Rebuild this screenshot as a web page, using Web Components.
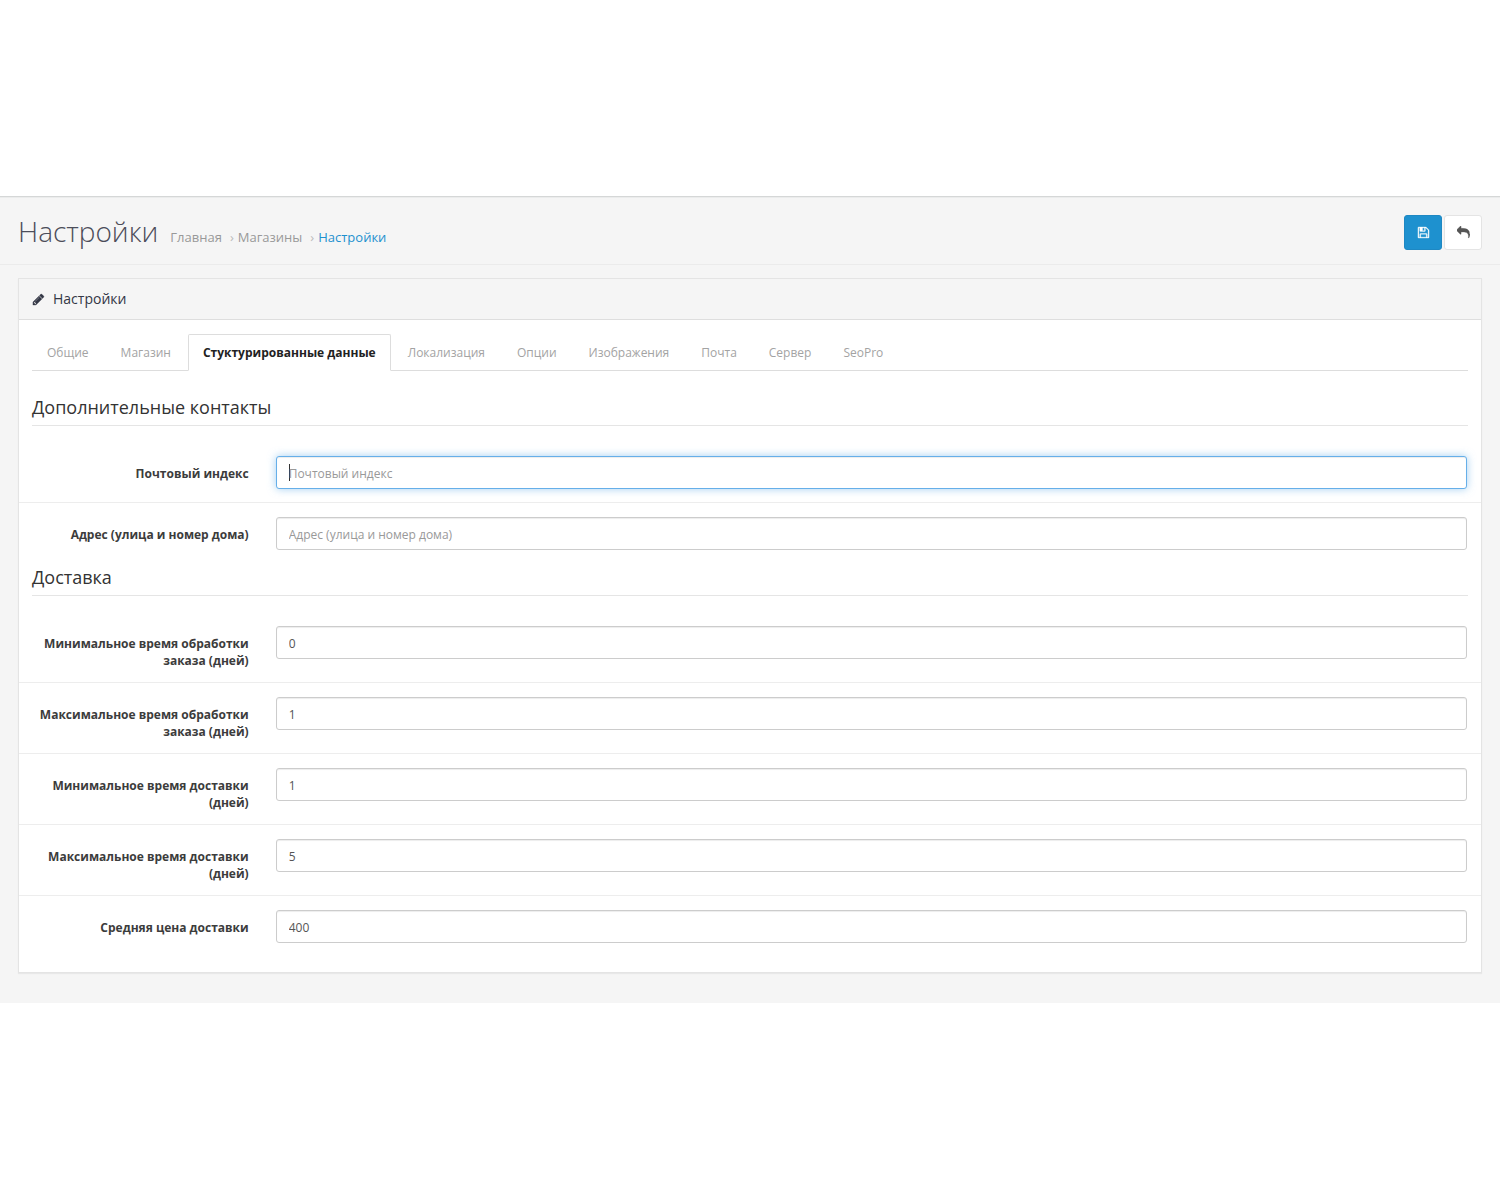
<!DOCTYPE html>
<html lang="ru">
<head>
<meta charset="utf-8">
<meta name="viewport" content="width=device-width, initial-scale=1">
<title>Настройки</title>
<style>
	body {
		margin: 0;
		padding: 196px 0;
		background: #fff;
		color: #3c3c3c;
		font-family: "Open Sans", "Noto Sans", sans-serif;
		font-size: 12px;
		line-height: 17px;
	}
</style>
</head>
<body>
<settings-page>
	<page-header slot="header" heading="Настройки">
		<crumb-item href="#home">Главная</crumb-item>
		<crumb-item href="#stores">Магазины</crumb-item>
		<crumb-item href="#settings" current>Настройки</crumb-item>
		<icon-button slot="actions" icon="save" label="Сохранить" primary></icon-button>
		<icon-button slot="actions" icon="reply" label="Отменить"></icon-button>
	</page-header>
	<edit-panel heading="Настройки">
		<tab-bar>
			<tab-item href="#general">Общие</tab-item>
			<tab-item href="#store">Магазин</tab-item>
			<tab-item href="#structured" active>Стуктурированные данные</tab-item>
			<tab-item href="#local">Локализация</tab-item>
			<tab-item href="#option">Опции</tab-item>
			<tab-item href="#image">Изображения</tab-item>
			<tab-item href="#mail">Почта</tab-item>
			<tab-item href="#server">Сервер</tab-item>
			<tab-item href="#seopro">SeoPro</tab-item>
		</tab-bar>
		<field-group heading="Дополнительные контакты">
			<form-field label="Почтовый индекс" placeholder="Почтовый индекс" focused></form-field>
			<form-field label="Адрес (улица и номер дома)" placeholder="Адрес (улица и номер дома)"></form-field>
		</field-group>
		<field-group heading="Доставка">
			<form-field label="Минимальное время обработки заказа (дней)" value="0"></form-field>
			<form-field label="Максимальное время обработки заказа (дней)" value="1"></form-field>
			<form-field label="Минимальное время доставки (дней)" value="1"></form-field>
			<form-field label="Максимальное время доставки (дней)" value="5"></form-field>
			<form-field label="Средняя цена доставки" value="400"></form-field>
		</field-group>
	</edit-panel>
</settings-page>

<script>
const icons = {
	pencil: 'M491 1536l91-91-235-235-91 91v107h128v128h107zm523-928q0-22-22-22-10 0-17 7l-542 542q-7 7-7 17 0 22 22 22 10 0 17-7l542-542q7-7 7-17zm-54-192l416 416-832 832h-416v-416zm683 96q0 53-37 90l-166 166-416-416 166-165q36-38 90-38 53 0 91 38l235 234q37 39 37 91z',
	save: 'M512 1536h768v-384h-768v384zm896 0h128v-896q0-14-10-38.5t-20-34.5l-281-281q-10-10-34-20t-39-10v416q0 40-28 68t-68 28h-576q-40 0-68-28t-28-68v-416h-128v1280h128v-416q0-40 28-68t68-28h832q40 0 68 28t28 68v416zm-384-928v-320q0-13-9.5-22.5t-22.5-9.5h-192q-13 0-22.5 9.5t-9.5 22.5v320q0 13 9.5 22.5t22.5 9.5h192q13 0 22.5-9.5t9.5-22.5zm640 32v928q0 40-28 68t-68 28h-1344q-40 0-68-28t-28-68v-1344q0-40 28-68t68-28h928q40 0 88 20t76 48l280 280q28 28 48 76t20 88z',
	reply: 'M1792 1120q0 166-127 451-3 7-10.5 24t-13.5 30-13 22q-12 17-28 17-15 0-23.5-10t-8.5-25q0-9 2.5-26.5t2.5-23.5q5-68 5-123 0-112-19.5-200.5t-54-153.5-89-112-116-78-146.5-47.5-169-25-194-7.5h-224v256q0 26-19 45t-45 19-45-19l-512-512q-19-19-19-45t19-45l512-512q19-19 45-19t45 19 19 45v256h224q713 0 875 403 53 134 53 333z'
};

// every element renders its markup once into an open shadow root
class BaseElement extends HTMLElement {
	constructor() {
		super();
		this.attachShadow({mode: 'open'});
	}

	connectedCallback() {
		this.shadowRoot.innerHTML = this.render();
	}

	attr(name) {
		return this.getAttribute(name) || '';
	}
}

class SvgIcon extends BaseElement {
	render() {
		return `
		<style>
			:host {
				display: inline-flex;
			}

			svg {
				width: 13px;
				height: 13px;
				fill: currentColor;
				stroke: currentColor;
				stroke-width: 40;
			}
		</style>
		<svg viewBox="0 0 1792 1792" aria-hidden="true"><path d="${icons[this.attr('name')]}"/></svg>`;
	}
}

class SettingsPage extends BaseElement {
	render() {
		return `
		<style>
			:host {
				display: block;
				background: #f5f5f5;
				border-top: 1px solid #d5d7d7;
				box-shadow: inset 0 1px 0 #ebecec;
			}

			main {
				padding: 13px 18px 30px;
			}
		</style>
		<slot name="header"></slot>
		<main><slot></slot></main>`;
	}
}

class PageHeader extends BaseElement {
	render() {
		return `
		<style>
			:host {
				display: flex;
				align-items: flex-start;
				justify-content: space-between;
				gap: 16px;
				padding: 18px 18px 14px;
				border-bottom: 1px solid #ebebeb;
			}

			.title, nav, .actions {
				display: flex;
			}

			.title {
				align-items: baseline;
				flex-wrap: wrap;
				column-gap: 12px;
			}

			h1 {
				margin: 0;
				color: #4c4d5a;
				font-size: 28px;
				font-weight: 300;
				line-height: 32px;
			}

			nav {
				font-size: 13px;
			}

			.actions {
				gap: 2px;
			}
		</style>
		<div class="title">
			<h1>${this.attr('heading')}</h1>
			<nav><slot></slot></nav>
		</div>
		<div class="actions"><slot name="actions"></slot></div>`;
	}
}

class CrumbItem extends BaseElement {
	render() {
		return `
		<style>
			:host {
				display: block;
			}

			a {
				color: #999;
				text-decoration: none;
			}

			:host([current]) a {
				color: #1e91cf;
			}

			:host(:not([current]))::after {
				content: "›";
				padding: 0 4px 0 8px;
				color: #bbb;
			}
		</style>
		<a href="${this.attr('href')}"><slot></slot></a>`;
	}
}

class IconButton extends BaseElement {
	render() {
		return `
		<style>
			:host {
				display: block;
			}

			button {
				display: flex;
				align-items: center;
				justify-content: center;
				width: 38px;
				height: 35px;
				padding: 0;
				color: #555;
				background: #fff;
				border: 1px solid #e4e4e4;
				border-radius: 3px;
				cursor: pointer;
			}

			:host([primary]) button {
				color: #fff;
				background: #1e91cf;
				border-color: #1e88c3;
			}
		</style>
		<button type="button" aria-label="${this.attr('label')}"><svg-icon name="${this.attr('icon')}"></svg-icon></button>`;
	}
}

class EditPanel extends BaseElement {
	render() {
		return `
		<style>
			:host {
				display: block;
				background: #fff;
				border: 1px solid #e4e4e4;
				box-shadow: 0 1px 1px rgba(0, 0, 0, .05);
			}

			header {
				display: flex;
				align-items: center;
				gap: 8px;
				padding: 10px 13px;
				color: #333745;
				background: #f5f5f5;
				border-bottom: 1px solid #dedede;
			}

			h2 {
				margin: 0;
				font-size: 14px;
				font-weight: 400;
				line-height: 20px;
			}

			form {
				padding: 14px 0 16px;
			}
		</style>
		<header>
			<svg-icon name="pencil"></svg-icon>
			<h2>${this.attr('heading')}</h2>
		</header>
		<form><slot></slot></form>`;
	}
}

class TabBar extends BaseElement {
	render() {
		return `
		<style>
			:host {
				display: block;
				padding: 0 13px;
			}

			nav {
				display: flex;
				gap: 2px;
				border-bottom: 1px solid #ddd;
			}
		</style>
		<nav><slot></slot></nav>`;
	}
}

class TabItem extends BaseElement {
	render() {
		return `
		<style>
			:host {
				display: block;
				margin-bottom: -1px;
			}

			a {
				display: block;
				padding: 9px 14px;
				border: 1px solid transparent;
				border-radius: 2px 2px 0 0;
				color: #a3a3a3;
				text-decoration: none;
			}

			:host([active]) a {
				color: #222;
				background: #fff;
				border-color: #ddd #ddd #fff;
				font-weight: 700;
			}
		</style>
		<a href="${this.attr('href')}"><slot></slot></a>`;
	}
}

class FieldGroup extends BaseElement {
	render() {
		return `
		<style>
			:host {
				display: block;
			}

			:host(:not(:first-of-type)) h3 {
				padding-top: 2px;
			}

			h3 {
				margin: 0 13px 16px;
				padding: 24px 0 6px;
				border-bottom: 1px solid #e5e5e5;
				color: #333;
				font-size: 18px;
				font-weight: 400;
				line-height: 24px;
			}
		</style>
		<h3>${this.attr('heading')}</h3>
		<slot></slot>`;
	}
}

class FormField extends BaseElement {
	connectedCallback() {
		super.connectedCallback();
		if (this.hasAttribute('focused')) {
			this.shadowRoot.querySelector('input').focus();
		}
	}

	render() {
		return `
		<style>
			:host {
				display: grid;
				grid-template-columns: minmax(0, 2fr) minmax(0, 10fr);
				padding: 14px 0 13px;
			}

			:host(:not(:first-child)) {
				border-top: 1px solid #ededed;
			}

			label {
				padding: 9px 14px 0;
				font-weight: 700;
				text-align: right;
			}

			input {
				box-sizing: border-box;
				height: 33px;
				margin: 0 14px 0 13px;
				padding: 8px 12px 6px;
				color: #555;
				background: #fff;
				border: 1px solid #ccc;
				border-radius: 3px;
				box-shadow: inset 0 1px 1px rgba(0, 0, 0, .075);
				font: inherit;
				outline: none;
			}

			input::placeholder {
				color: #999;
			}

			input:focus {
				border-color: #66afe9;
				box-shadow: inset 0 1px 1px rgba(0, 0, 0, .075), 0 0 8px rgba(102, 175, 233, .6);
			}

			/* steady caret in an empty focused field */
			input:focus:placeholder-shown {
				caret-color: transparent;
				background: linear-gradient(#333, #333) 12px 7px / 1px 17px no-repeat #fff;
			}
		</style>
		<label for="field">${this.attr('label')}</label>
		<input id="field" type="text" value="${this.attr('value')}" placeholder="${this.attr('placeholder')}">`;
	}
}

window.customElements.define('svg-icon', SvgIcon);
window.customElements.define('settings-page', SettingsPage);
window.customElements.define('page-header', PageHeader);
window.customElements.define('crumb-item', CrumbItem);
window.customElements.define('icon-button', IconButton);
window.customElements.define('edit-panel', EditPanel);
window.customElements.define('tab-bar', TabBar);
window.customElements.define('tab-item', TabItem);
window.customElements.define('field-group', FieldGroup);
window.customElements.define('form-field', FormField);
</script>
</body>
</html>
